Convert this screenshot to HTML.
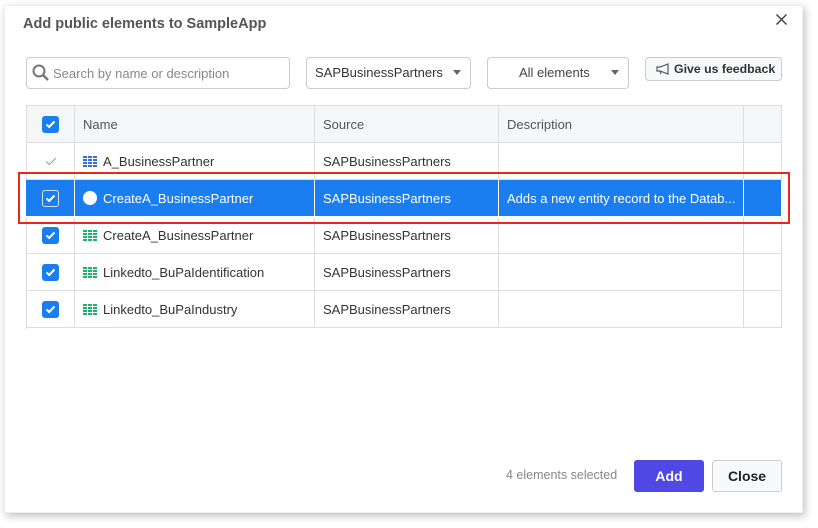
<!DOCTYPE html>
<html><head><style>
*{box-sizing:border-box;margin:0;padding:0}
body{width:818px;height:528px;background:#fff;font-family:"Liberation Sans",sans-serif;position:relative;overflow:hidden;color:#333}
.dlg{position:absolute;left:4px;top:5px;width:799px;height:508px;background:#fff;box-shadow:2px 3px 8px rgba(0,0,0,.25);border:1px solid #eee}
.a{position:absolute}
.title{left:23px;top:16px;font-size:14.5px;font-weight:bold;color:#555}
.inp{border:1px solid #ccc;border-radius:4px;background:#fff}
.cell{position:absolute;border-right:1px solid #ddd;border-bottom:1px solid #ddd;font-size:13px;display:flex;align-items:center;padding-left:8px;white-space:nowrap}
.cb{width:17px;height:17px;border-radius:3px;background:#1a7ef0;display:flex;align-items:center;justify-content:center}
.grid{display:inline-grid;grid-template-columns:repeat(3,4px);grid-auto-rows:2px;gap:1px;margin-right:6px}
.grid i{width:4px;height:2px;display:block;background:currentColor}
.b{color:#2f6fe0}.g{color:#1fb36a}
.sel{background:#1a7ef0;color:#fff;border-color:#fff}
</style></head><body>
<div class="dlg"></div>
<div class="a title">Add public elements to SampleApp</div>
<svg class="a" style="left:775px;top:13px" width="13" height="13"><path d="M1.5 1.5L11.5 11.5M11.5 1.5L1.5 11.5" stroke="#444" stroke-width="1.5"/></svg>
<div class="a inp" style="left:26px;top:57px;width:264px;height:32px"></div>
<svg class="a" style="left:32px;top:64px" width="18" height="18"><circle cx="7" cy="7" r="5.5" stroke="#777" stroke-width="2" fill="none"/><path d="M11 11L16 16" stroke="#777" stroke-width="2.5"/></svg>
<div class="a" style="left:53px;top:66px;font-size:13px;color:#888">Search by name or description</div>
<div class="a inp" style="left:306px;top:57px;width:165px;height:32px"></div>
<div class="a" style="left:315px;top:65px;font-size:13px;color:#333">SAPBusinessPartners</div>
<div class="a" style="left:453px;top:70px;border:4px solid transparent;border-top:5px solid #666"></div>
<div class="a inp" style="left:487px;top:57px;width:142px;height:32px"></div>
<div class="a" style="left:519px;top:65px;font-size:13px;color:#444">All elements</div>
<div class="a" style="left:611px;top:70px;border:4px solid transparent;border-top:5px solid #666"></div>
<div class="a inp" style="left:645px;top:57px;width:137px;height:24px;background:#f8f9fa"></div>
<svg class="a" style="left:655px;top:62px" width="16" height="14"><path d="M2 5h3l8-3v10l-8-3H2z M5 9l1 3" stroke="#555" stroke-width="1.2" fill="none"/></svg>
<div class="a" style="left:674px;top:62px;font-size:12.3px;font-weight:bold;color:#333">Give us feedback</div>

<div class="a" style="left:26px;top:105px;width:756px;height:224px;border-left:1px solid #ddd;border-top:1px solid #ddd"></div>
<div class="cell" style="left:26px;top:105px;width:49px;height:38px;background:#f5f6f7;border-left:1px solid #ddd;border-top:1px solid #ddd;justify-content:center;padding:0"><div class="cb"><svg width="11" height="9"><path d="M1.5 4.5L4.2 7L9.5 1.5" stroke="#fff" stroke-width="2" fill="none"/></svg></div></div>
<div class="cell" style="left:75px;top:105px;width:240px;height:38px;background:#f5f6f7;border-top:1px solid #ddd;color:#555">Name</div>
<div class="cell" style="left:315px;top:105px;width:184px;height:38px;background:#f5f6f7;border-top:1px solid #ddd;color:#555">Source</div>
<div class="cell" style="left:499px;top:105px;width:245px;height:38px;background:#f5f6f7;border-top:1px solid #ddd;color:#555">Description</div>
<div class="cell" style="left:744px;top:105px;width:38px;height:38px;background:#f5f6f7;border-top:1px solid #ddd"></div>

<div class="cell" style="left:26px;top:143px;width:49px;height:37px;justify-content:center;padding:0;border-left:1px solid #ddd"><svg width="12" height="9"><path d="M1 4.5L4.2 7.5L11 1" stroke="#999" stroke-width="1" fill="none"/></svg></div>
<div class="cell" style="left:75px;top:143px;width:240px;height:37px"><span class="grid b"><i></i><i></i><i></i><i></i><i></i><i></i><i></i><i></i><i></i><i></i><i></i><i></i></span>A_BusinessPartner</div>
<div class="cell" style="left:315px;top:143px;width:184px;height:37px">SAPBusinessPartners</div>
<div class="cell" style="left:499px;top:143px;width:245px;height:37px"></div>
<div class="cell" style="left:744px;top:143px;width:38px;height:37px"></div>

<div class="cell sel" style="left:26px;top:180px;width:49px;height:37px;justify-content:center;padding:0"><div class="cb" style="border:1px solid #cfe3ff"><svg width="11" height="9"><path d="M1.5 4.5L4.2 7L9.5 1.5" stroke="#fff" stroke-width="2" fill="none"/></svg></div></div>
<div class="cell sel" style="left:75px;top:180px;width:240px;height:37px"><span style="width:14px;height:14px;border-radius:50%;background:#fff;margin-right:6px;display:inline-block"></span>CreateA_BusinessPartner</div>
<div class="cell sel" style="left:315px;top:180px;width:184px;height:37px">SAPBusinessPartners</div>
<div class="cell sel" style="left:499px;top:180px;width:245px;height:37px">Adds a new entity record to the Datab...</div>
<div class="cell sel" style="left:744px;top:180px;width:38px;height:37px"></div>

<div class="cell" style="left:26px;top:217px;width:49px;height:37px;justify-content:center;padding:0;border-left:1px solid #ddd"><div class="cb"><svg width="11" height="9"><path d="M1.5 4.5L4.2 7L9.5 1.5" stroke="#fff" stroke-width="2" fill="none"/></svg></div></div>
<div class="cell" style="left:75px;top:217px;width:240px;height:37px"><span class="grid g"><i></i><i></i><i></i><i></i><i></i><i></i><i></i><i></i><i></i><i></i><i></i><i></i></span>CreateA_BusinessPartner</div>
<div class="cell" style="left:315px;top:217px;width:184px;height:37px">SAPBusinessPartners</div>
<div class="cell" style="left:499px;top:217px;width:245px;height:37px"></div>
<div class="cell" style="left:744px;top:217px;width:38px;height:37px"></div>

<div class="cell" style="left:26px;top:254px;width:49px;height:37px;justify-content:center;padding:0;border-left:1px solid #ddd"><div class="cb"><svg width="11" height="9"><path d="M1.5 4.5L4.2 7L9.5 1.5" stroke="#fff" stroke-width="2" fill="none"/></svg></div></div>
<div class="cell" style="left:75px;top:254px;width:240px;height:37px"><span class="grid g"><i></i><i></i><i></i><i></i><i></i><i></i><i></i><i></i><i></i><i></i><i></i><i></i></span>Linkedto_BuPaIdentification</div>
<div class="cell" style="left:315px;top:254px;width:184px;height:37px">SAPBusinessPartners</div>
<div class="cell" style="left:499px;top:254px;width:245px;height:37px"></div>
<div class="cell" style="left:744px;top:254px;width:38px;height:37px"></div>

<div class="cell" style="left:26px;top:291px;width:49px;height:37px;justify-content:center;padding:0;border-left:1px solid #ddd"><div class="cb"><svg width="11" height="9"><path d="M1.5 4.5L4.2 7L9.5 1.5" stroke="#fff" stroke-width="2" fill="none"/></svg></div></div>
<div class="cell" style="left:75px;top:291px;width:240px;height:37px"><span class="grid g"><i></i><i></i><i></i><i></i><i></i><i></i><i></i><i></i><i></i><i></i><i></i><i></i></span>Linkedto_BuPaIndustry</div>
<div class="cell" style="left:315px;top:291px;width:184px;height:37px">SAPBusinessPartners</div>
<div class="cell" style="left:499px;top:291px;width:245px;height:37px"></div>
<div class="cell" style="left:744px;top:291px;width:38px;height:37px"></div>

<div class="a" style="left:18px;top:172px;width:772px;height:52px;border:2px solid #e8281b"></div>

<div class="a" style="left:506px;top:468px;font-size:12.5px;color:#888">4 elements selected</div>
<div class="a" style="left:634px;top:460px;width:70px;height:32px;background:#5048e5;border-radius:3px;color:#fff;font-weight:bold;font-size:14px;display:flex;align-items:center;justify-content:center">Add</div>
<div class="a" style="left:712px;top:460px;width:70px;height:32px;background:#f8f9fa;border:1px solid #ccc;border-radius:3px;color:#222;font-weight:bold;font-size:14px;display:flex;align-items:center;justify-content:center">Close</div>
</body></html>
